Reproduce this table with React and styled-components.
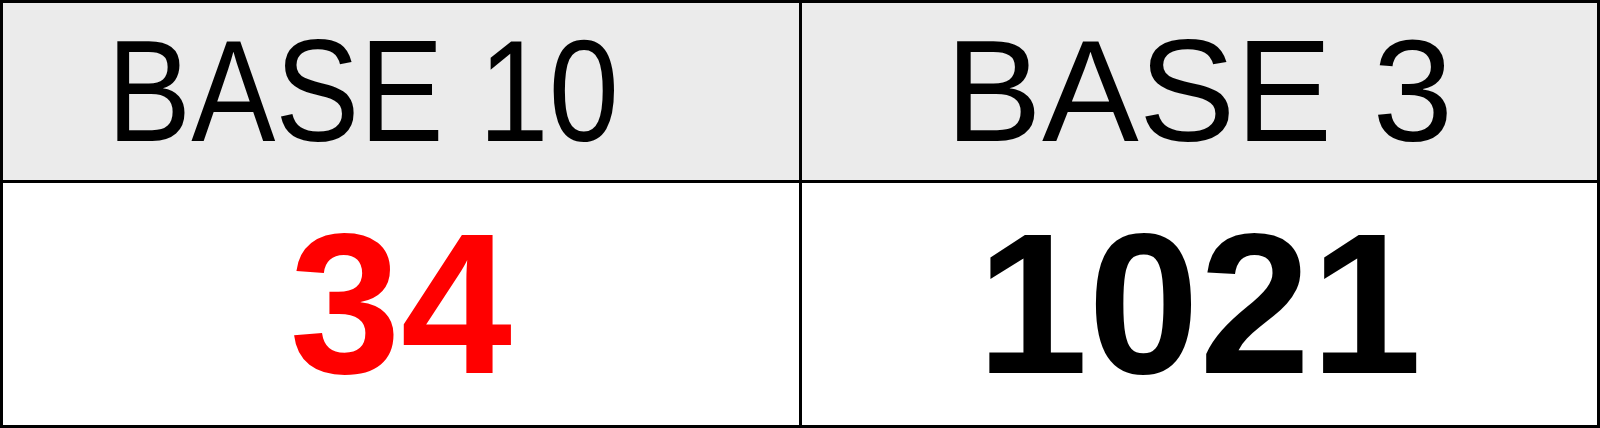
import styled, { createGlobalStyle } from "styled-components";

const GlobalStyle = createGlobalStyle`
  html, body {
    margin: 0;
    padding: 0;
    background: #ffffff;
  }
  body {
    font-family: "Liberation Sans", Arial, sans-serif;
  }
`;

const Table = styled.div`
  width: 1600px;
  height: 428px;
  box-sizing: border-box;
  display: grid;
  grid-template-columns: 1fr 1fr;
  grid-template-rows: 177px 242px;
  gap: 3px;
  padding: 3px;
  background: #000000;
`;

const HeadCell = styled.div`
  background: #ebebeb;
  display: flex;
  align-items: center;
  justify-content: center;
  overflow: hidden;
`;

const HeadText = styled.span`
  display: inline-block;
  font-size: 145px;
  line-height: 1;
  color: #000000;
  white-space: nowrap;
  transform: scaleX(${(p) => p.squeeze || 1});
  transform-origin: left center;
`;

const ValueCell = styled.div`
  background: #ffffff;
  display: flex;
  align-items: center;
  justify-content: center;
`;

const Value = styled.span`
  font-size: 200px;
  font-weight: bold;
  line-height: 1;
  color: ${(p) => p.color || "#000000"};
`;

export default function App() {
  return (
    <>
      <GlobalStyle />
      <Table>
        <HeadCell>
          <HeadText squeeze={0.87}>BASE 10</HeadText>
        </HeadCell>
        <HeadCell>
          <HeadText>BASE 3</HeadText>
        </HeadCell>
        <ValueCell>
          <Value color="#ff0000">34</Value>
        </ValueCell>
        <ValueCell>
          <Value>1021</Value>
        </ValueCell>
      </Table>
    </>
  );
}
